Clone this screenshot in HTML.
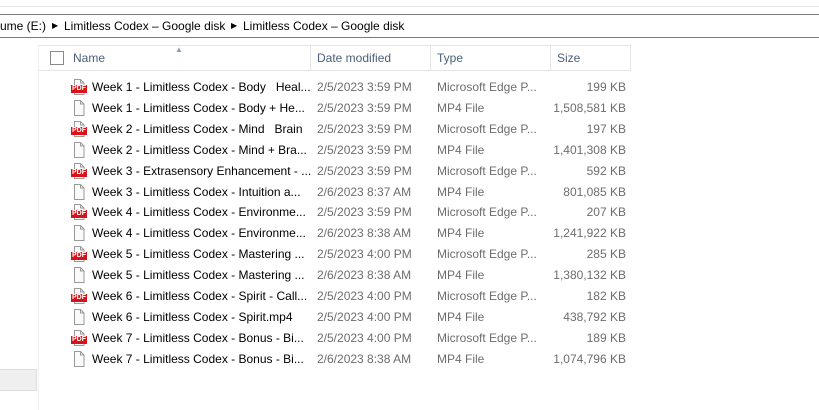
<!DOCTYPE html><html><head><style>
body{margin:0;width:819px;height:410px;background:#fff;font-family:"Liberation Sans",sans-serif;font-size:12px;position:relative;overflow:hidden}
.a{position:absolute}
.hdr{color:#4c607a}
.row{position:absolute;left:72px;height:20px;line-height:20px;width:560px}
.row span{position:absolute;white-space:pre}
.n{left:20px;color:#000}
.d{left:245px;color:#6d6d6d}
.t{left:365px;color:#6d6d6d}
.s{right:6px;color:#6d6d6d;text-align:right}
.ic{position:absolute;left:0;top:2px;width:14px;height:16px}
</style></head><body>
<div class="a" style="left:0;top:6px;width:819px;height:1px;background:#e3e3e3"></div>
<div class="a" style="left:0;top:14px;width:819px;height:22px;border-top:1px solid #7a7a7a;border-bottom:1px solid #7a7a7a;line-height:22px;color:#000">
<span style="position:absolute;left:0">ume (E:)</span>
<span style="position:absolute;left:52px;font-size:8px">▶</span>
<span style="position:absolute;left:64px">Limitless Codex – Google disk</span>
<span style="position:absolute;left:231px;font-size:8px">▶</span>
<span style="position:absolute;left:243px">Limitless Codex – Google disk</span>
</div>
<div class="a" style="left:38px;top:45px;width:1px;height:365px;background:#f0f0f0"></div>
<div class="a" style="left:0;top:369px;width:36px;height:20px;background:#efefef;border:1px solid #dcdcdc;border-left:none"></div>
<div class="a" style="left:39px;top:45px;width:591px;height:24px;border-top:1px solid #e5e5e5;border-bottom:1px solid #e5e5e5;border-right:1px solid #e5e5e5;line-height:24px">
<div class="a" style="left:11px;top:5px;width:12px;height:12px;border:1px solid #8a8a8a;background:#fff"></div>
<span class="a hdr" style="left:34px">Name</span>
<span class="a" style="left:136px;top:-8px;font-size:8px;color:#8a9bb0">▲</span>
<div class="a" style="left:271px;top:0;width:1px;height:24px;background:#e5e5e5"></div>
<span class="a hdr" style="left:278px">Date modified</span>
<div class="a" style="left:391px;top:0;width:1px;height:24px;background:#e5e5e5"></div>
<span class="a hdr" style="left:398px">Type</span>
<div class="a" style="left:511px;top:0;width:1px;height:24px;background:#e5e5e5"></div>
<span class="a hdr" style="left:518px">Size</span>
</div>
<svg width="0" height="0" style="position:absolute"><defs>
<symbol id="f" viewBox="0 0 14 16"><path d="M2.5 .5h6l3.5 3.5v11.5h-9.5z" fill="#fafafa" stroke="#9a9a9a"/><path d="M8.5 .5v3.5h3.5" fill="none" stroke="#9a9a9a"/></symbol>
</defs></svg>
<div id="rows"></div>
<script>
var r=[["Week 1 - Limitless Codex - Body   Heal...","2/5/2023 3:59 PM","Microsoft Edge P...","199 KB",1],
["Week 1 - Limitless Codex - Body + He...","2/5/2023 3:59 PM","MP4 File","1,508,581 KB",0],
["Week 2 - Limitless Codex - Mind   Brain","2/5/2023 3:59 PM","Microsoft Edge P...","197 KB",1],
["Week 2 - Limitless Codex - Mind + Bra...","2/5/2023 3:59 PM","MP4 File","1,401,308 KB",0],
["Week 3 - Extrasensory Enhancement - ...","2/5/2023 3:59 PM","Microsoft Edge P...","592 KB",1],
["Week 3 - Limitless Codex - Intuition a...","2/6/2023 8:37 AM","MP4 File","801,085 KB",0],
["Week 4 - Limitless Codex - Environme...","2/5/2023 3:59 PM","Microsoft Edge P...","207 KB",1],
["Week 4 - Limitless Codex - Environme...","2/6/2023 8:38 AM","MP4 File","1,241,922 KB",0],
["Week 5 - Limitless Codex - Mastering ...","2/5/2023 4:00 PM","Microsoft Edge P...","285 KB",1],
["Week 5 - Limitless Codex - Mastering ...","2/6/2023 8:38 AM","MP4 File","1,380,132 KB",0],
["Week 6 - Limitless Codex - Spirit - Call...","2/5/2023 4:00 PM","Microsoft Edge P...","182 KB",1],
["Week 6 - Limitless Codex - Spirit.mp4","2/5/2023 4:00 PM","MP4 File","438,792 KB",0],
["Week 7 - Limitless Codex - Bonus - Bi...","2/5/2023 4:00 PM","Microsoft Edge P...","189 KB",1],
["Week 7 - Limitless Codex - Bonus - Bi...","2/6/2023 8:38 AM","MP4 File","1,074,796 KB",0]];
var h="";r.forEach(function(x,i){var y=77+i*20.9;
var ic='<svg class="ic" viewBox="0 0 14 16"><use href="#f"/></svg>';
if(x[4])ic+='<div style="position:absolute;left:-1px;top:8px;width:16px;height:8px;background:#d9121a;color:#fff;font-size:7px;font-weight:bold;line-height:8px;text-align:center">PDF</div>';
h+='<div class="row" style="top:'+y+'px">'+ic+'<span class="n">'+x[0]+'</span><span class="d">'+x[1]+'</span><span class="t">'+x[2]+'</span><span class="s">'+x[3]+'</span></div>';});
document.getElementById("rows").innerHTML=h;
</script>
</body></html>
